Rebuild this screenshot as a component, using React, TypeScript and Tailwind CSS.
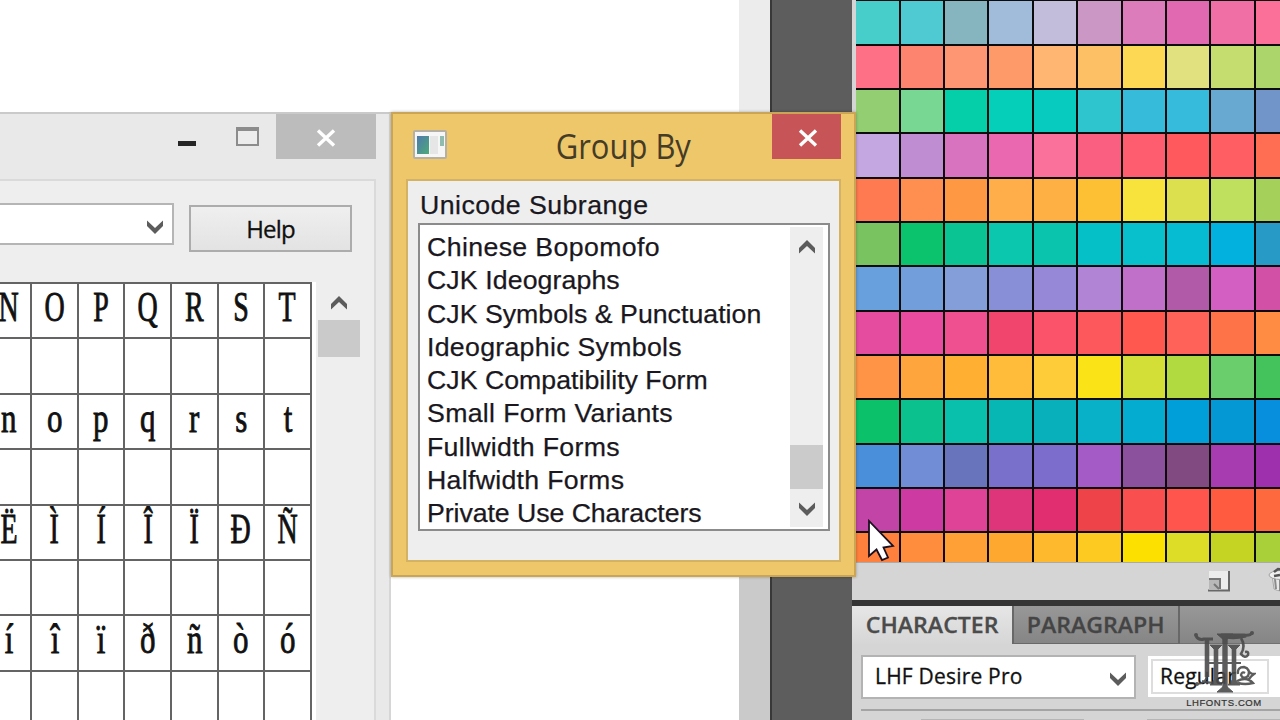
import React from "react";

const swatches: string[][] = [
  ["#47cdca", "#4fcad3", "#86b5c0", "#a1bbdb", "#c2bddb", "#cb97c5", "#dd7cba", "#e169b1", "#f06fa5", "#fb7098"],
  ["#fd7085", "#fd846f", "#fe9673", "#fe9a6a", "#feb672", "#fec065", "#fcd854", "#e1e27f", "#c5dc6e", "#acd56b"],
  ["#93ce72", "#77d793", "#05cfa9", "#06cfb9", "#06cbbe", "#2fc5cf", "#37bbda", "#37bbdc", "#68a9d2", "#7295c9"],
  ["#c4a7e0", "#bf8dd2", "#d873bf", "#ea68b0", "#fa729c", "#fa5e80", "#fe5d70", "#ff595e", "#ff5e62", "#ff6d52"],
  ["#ff7a50", "#ff8f50", "#ff9842", "#ffae4a", "#ffb045", "#fdc035", "#f8e33d", "#dcdf4e", "#bfe05f", "#a5d05a"],
  ["#7ac361", "#0ac36c", "#0bc494", "#0bc7ae", "#0ac4ae", "#06c0c8", "#07c0cb", "#06bcd2", "#02b1de", "#279ac5"],
  ["#67a0dc", "#729fdb", "#849eda", "#888fd6", "#9688d6", "#b184d5", "#c070c8", "#b15aa8", "#d35fc3", "#d250a5"],
  ["#e54c9f", "#e94b9e", "#ef508f", "#f2456d", "#fb5369", "#fd595c", "#ff584f", "#ff6258", "#ff7348", "#ff8c42"],
  ["#ff9446", "#ffa53d", "#ffb033", "#ffbc3b", "#fdcc38", "#fae316", "#d3df37", "#b0da40", "#6bce6d", "#44c35c"],
  ["#0bc169", "#0bc18d", "#09c0ad", "#07b7b4", "#08b0bc", "#08b1c7", "#04acd0", "#019fd9", "#0499d4", "#078edc"],
  ["#4a8fd9", "#718dd6", "#6874bc", "#7970cc", "#7c6dcd", "#a55bc5", "#8c519c", "#814b82", "#a63cb0", "#9e30ad"],
  ["#c344a7", "#cd3ba2", "#df4398", "#de347a", "#e12e70", "#ef434a", "#f9504f", "#ff554d", "#ff5b40", "#ff693e"],
  ["#ff803c", "#ff8d3d", "#ffa036", "#ffa82f", "#ffb92d", "#fdca22", "#fbe000", "#dddc26", "#c5d322", "#a9d039"],
];

const blankRow = ["", "", "", "", "", "", ""];
const charRows: string[][] = [
  ["N", "O", "P", "Q", "R", "S", "T"],
  blankRow,
  ["n", "o", "p", "q", "r", "s", "t"],
  blankRow,
  ["Ë", "Ì", "Í", "Î", "Ï", "Đ", "Ñ"],
  blankRow,
  ["í", "î", "ï", "ð", "ñ", "ò", "ó"],
  blankRow,
];

const subranges = [
  { name: "Chinese Bopomofo", spacing: "tracking-[0.38px]" },
  { name: "CJK Ideographs", spacing: "tracking-[0.1px]" },
  { name: "CJK Symbols & Punctuation", spacing: "tracking-[0.02px]" },
  { name: "Ideographic Symbols", spacing: "tracking-[0.3px]" },
  { name: "CJK Compatibility Form", spacing: "tracking-[0.02px]" },
  { name: "Small Form Variants", spacing: "tracking-[0.33px]" },
  { name: "Fullwidth Forms", spacing: "tracking-[0.3px]" },
  { name: "Halfwidth Forms", spacing: "tracking-[0.3px]" },
  { name: "Private Use Characters", spacing: "tracking-[-0.06px]" },
];

function Chevron({ up = false }: { up?: boolean }) {
  return (
    <svg width="18" height="16" viewBox="0 0 18 16" className={up ? "rotate-180" : ""}>
      <path d="M1 1.5 L9 9 L17 1.5 V7 L9 15 L1 7 Z" fill="#5c5c5c" />
    </svg>
  );
}

function Cross() {
  return (
    <svg width="20" height="18" viewBox="0 0 20 18">
      <path d="M2 1.5 L18 16.5 M18 1.5 L2 16.5" stroke="#fff" strokeWidth="3.4" />
    </svg>
  );
}

function CharacterMap() {
  return (
    <div className="absolute left-0 top-[112px] flex h-[608px] w-[391px] flex-col border-r-2 border-t-2 border-r-[#d6d6d6] border-t-[#cacaca] bg-[#e9e9e9]">
      <div className="flex h-[65px] shrink-0 items-start justify-end pr-[13px]">
        <div className="mr-[40px] mt-[27px] h-[5px] w-[18px] bg-[#262626]" />
        <div className="mr-[17px] mt-[13px] h-[19px] w-[23px] border-2 border-t-[4px] border-[#8c8c8c] bg-[#ececec]" />
        <div className="flex h-[45px] w-[100px] items-center justify-center bg-[#bcbcbc] pt-[2px]">
          <Cross />
        </div>
      </div>
      <div className="mr-[13px] flex min-h-0 flex-1 flex-col border-r-2 border-t-2 border-[#dadada] bg-[#eeeeee]">
        <div className="flex shrink-0 items-start pt-[22px]">
          <div className="flex h-[42px] w-[174px] items-center justify-end border-2 border-l-0 border-[#b5b5b5] bg-white pr-[8px] pt-[5px]">
            <Chevron />
          </div>
          <button className="ml-[15px] mt-[2px] flex h-[47px] w-[163px] items-center justify-center border-2 border-[#acacac] bg-linear-to-b from-[#efefef] to-[#e3e3e3] pt-[1px] font-['Open_Sans',sans-serif] text-[24px] tracking-[-0.8px] text-[#101010] [-webkit-text-stroke:0.3px_#101010]">
            <span>Help</span>
          </button>
        </div>
        <div className="mt-[30px] flex min-h-0 flex-1 overflow-hidden">
          <div className="w-[316px] shrink-0 bg-white">
            <div className="grid w-[312px] grid-cols-[30.3px_repeat(6,44.6px)] gap-[2px] bg-[#646464] py-[2px] pr-[2px]">
              {charRows.flatMap((row, r) =>
                row.map((g, c) => (
                  <div key={`${r}-${c}`} className="flex h-[53.4px] justify-center bg-white">
                    {g && (
                      <span
                        className={
                          (r === 2 || r === 6 ? "scale-x-[0.72] " : "scale-x-[0.65] ") +
                          (c === 0 ? "ml-[-13px] " : "") +
                          "font-['Liberation_Serif',serif] text-[43px] leading-[46px] text-[#111] [-webkit-text-stroke:0.9px_#111]"
                        }
                      >
                        {g}
                      </span>
                    )}
                  </div>
                )),
              )}
            </div>
          </div>
          <div className="ml-[2px] flex w-[42px] flex-col items-center">
            <div className="flex h-[38px] items-center justify-center pt-[3px]">
              <Chevron up />
            </div>
            <div className="h-[37px] w-full bg-[#cacaca]" />
          </div>
        </div>
      </div>
    </div>
  );
}

function AppIcon() {
  return (
    <svg width="34" height="29" viewBox="0 0 34 29">
      <defs>
        <linearGradient id="thumb" x1="0" y1="0" x2="1" y2="1">
          <stop offset="0" stopColor="#4f78ae" />
          <stop offset="1" stopColor="#4bab78" />
        </linearGradient>
      </defs>
      <rect x="1" y="1" width="32" height="27" rx="1" fill="#f6f6f6" stroke="#b4b0a6" strokeWidth="2" />
      <rect x="4" y="6" width="12" height="18" fill="url(#thumb)" />
      <rect x="17" y="6" width="8" height="18" fill="#e6e6e6" />
      <rect x="27" y="6" width="4" height="10" fill="#8fbcae" />
    </svg>
  );
}

function GroupByDialog() {
  return (
    <div className="absolute left-[391px] top-[112px] flex h-[465px] w-[465px] flex-col border-2 border-[#c9a555] bg-[#eec76b] shadow-[0_0_3px_rgba(0,0,0,0.3)]">
      <div className="flex h-[65px] shrink-0 items-start">
        <div className="ml-[20px] mt-[16px] shrink-0">
          <AppIcon />
        </div>
        <div className="flex flex-1 justify-center pl-[27px] pt-[8px] font-['Open_Sans',sans-serif] text-[34px] leading-[48px] text-[#453c26]">
          <span className="scale-x-[0.91] whitespace-nowrap">Group By</span>
        </div>
        <div className="mr-[13px] flex h-[45px] w-[69px] items-center justify-center bg-[#c75456] pl-[2px] pt-[2px]">
          <Cross />
        </div>
      </div>
      <div className="mx-[13px] mb-[13px] flex flex-1 flex-col border-2 border-[#d3b264] bg-[#eeeeee] px-[10px]">
        <div className="h-[42px] pl-[2px] pt-[7px] font-['Liberation_Sans',sans-serif] text-[26.7px] leading-[34px] tracking-[0.46px] text-[#1a1720] [-webkit-text-stroke:0.25px_#1a1720]">
          Unicode Subrange
        </div>
        <div className="flex h-[308px] w-[412px] justify-between border-2 border-[#8b8b8b] bg-white">
          <ul className="pl-[7px] pt-[6px] font-['Liberation_Sans',sans-serif] text-[26.7px] leading-[33.3px] text-[#1a1720] [-webkit-text-stroke:0.25px_#1a1720]">
            {subranges.map((s) => (
              <li key={s.name} className={"whitespace-nowrap " + s.spacing}>
                {s.name}
              </li>
            ))}
          </ul>
          <div className="mr-[5px] mt-[2px] flex h-[300px] w-[33px] flex-col items-center bg-[#eeeeee] pb-[9px] pt-[12px]">
            <Chevron up />
            <div className="mt-[190px] h-[44px] w-full bg-[#cbcbcb]" />
            <div className="mt-[12px]">
              <Chevron />
            </div>
          </div>
        </div>
      </div>
    </div>
  );
}

function NewSwatchIcon() {
  return (
    <svg width="22" height="22" viewBox="0 0 22 22" className="shrink-0">
      <rect x="1" y="1" width="19" height="19" fill="#ededed" />
      <path d="M0 20.5 H21 V1" fill="none" stroke="#686868" strokeWidth="2" />
      <path d="M1 9 H12 V20 H1 Z" fill="#b8b8b8" />
      <path d="M1 9 H12 V19 M6 14 L11 19" fill="none" stroke="#777" strokeWidth="2" />
    </svg>
  );
}

function TrashIcon() {
  return (
    <svg width="26" height="26" viewBox="0 0 26 26">
      <path d="M4 8 L6 22 Q13 26 20 22 L22 8 Z" fill="#e8e8e8" stroke="#a8a8a8" strokeWidth="1" />
      <path d="M7 12 L8 22 M12 12 V24" stroke="#8a8a8a" strokeWidth="2" />
      <ellipse cx="13" cy="8" rx="12" ry="4.5" fill="#f0f0f0" stroke="#a0a0a0" strokeWidth="1" />
      <path d="M6 9 L12 8 M6 5 L10 2 L16 3" fill="none" stroke="#555" strokeWidth="2.5" />
    </svg>
  );
}

function StudioPanel() {
  return (
    <div className="flex w-[428px] shrink-0 flex-col overflow-hidden bg-[#d5d5d5]">
      <div className="h-[562px] shrink-0 overflow-hidden pl-[4.4px]">
        <div className="grid w-[446px] grid-cols-[repeat(10,42.37px)] gap-[2px] bg-[#0c0c0c] pt-[1.3px]">
          {swatches.flatMap((row, r) =>
            row.map((color, c) => <div key={`${r}-${c}`} className="h-[42.34px]" style={{ backgroundColor: color }} />),
          )}
        </div>
      </div>
      <div className="flex h-[38px] shrink-0 items-start border-t border-[#aaaaaa] pl-[356px] pt-[7px]">
        <NewSwatchIcon />
        <div className="ml-[38px] mt-[-3px] w-[12px] shrink-0 overflow-hidden">
          <div className="w-[26px]">
            <TrashIcon />
          </div>
        </div>
      </div>
      <div className="h-[6px] shrink-0 bg-[#353535]" />
      <div className="flex h-[38px] shrink-0 bg-linear-to-b from-[#989898] to-[#858585] font-['Open_Sans',sans-serif] text-[22px] font-semibold leading-[37px] text-[#4b4b4b] [-webkit-text-stroke:0.3px_#4b4b4b]">
        <div className="flex w-[160px] shrink-0 justify-center bg-linear-to-b from-[#e6e6e6] to-[#d6d6d6]">
          <span className="scale-x-[1.05]">CHARACTER</span>
        </div>
        <div className="flex w-[168px] shrink-0 justify-center border-x-2 border-b border-[#686868] text-[#444]">
          <span className="scale-x-[1.05]">PARAGRAPH</span>
        </div>
        <div className="flex-1 border-b border-[#707070]" />
      </div>
      <div className="flex shrink-0 items-start pl-[9px] pt-[11px] font-['Open_Sans',sans-serif] text-[21px] tracking-[0.2px] text-[#111] [-webkit-text-stroke:0.3px_#111]">
        <div className="flex h-[44px] w-[275px] shrink-0 items-center justify-between border-2 border-[#b3b3b3] bg-white pl-[12px] pr-[7px]">
          <span>LHF Desire Pro</span>
          <div className="pt-[3px]">
            <Chevron />
          </div>
        </div>
        <div className="ml-[12px] mt-[1px] flex h-[41px] w-[140px] shrink-0 items-center bg-white pl-[3px]">
          <div className="flex h-[35px] w-[118px] items-center border-2 border-[#dddddd] pl-[7px]">Regular</div>
        </div>
      </div>
      <div className="ml-[9px] mt-[10px] h-[2px] shrink-0 bg-[#a4a4a4]" />
      <div className="flex pl-[69px] pt-[8px]">
        <div className="h-[4px] w-[163px] shrink-0 border-t border-[#b5b5b5]" />
        <div className="ml-[63px] h-[4px] w-[140px] border-t border-[#b5b5b5]" />
      </div>
    </div>
  );
}

function Watermark() {
  return (
    <div className="absolute left-[1184px] top-[630px] flex w-[80px] flex-col items-center opacity-90">
      <svg width="64" height="66" viewBox="0 0 64 66" fill="none" stroke="#4b4b4b">
        <path d="M4 6 Q7 11 12 9 H21 M29 5 H52 Q58 6 60 3 M29 5 Q38 10 54 6" strokeWidth="3" />
        <path d="M15 8 V47" strokeWidth="4.600" />
        <path d="M5 54 Q14 54 15 45 M10 51 Q20 54 26 52" strokeWidth="2.200" />
        <path d="M24 18 V53 M42 18 V53" strokeWidth="4.600" />
        <path d="M18 15 H30 L24 21 Z M36 15 H48 L42 21 Z M18 55 H30 L24 48 Z M36 55 H48 L42 48 Z" fill="#4b4b4b" strokeWidth="1" />
        <path d="M33 4 V60" strokeWidth="5.400" />
        <path d="M25 62 H41 L33 55 Z M25 4 H41 L33 11 Z" fill="#4b4b4b" strokeWidth="1" />
        <path d="M16 33 H49" strokeWidth="2" />
        <path d="M49 8 Q54 16 49 24 Q53 29 56 25 Q57 21 53 22" strokeWidth="2.600" />
        <path d="M46 44 Q45 37 52 37 Q59 39 56 46 Q51 50 49 45 Q50 41 53 43 M56 40 Q58 44 62 44 Q59 46 57 49 M45 51 Q55 46 61 53 Q53 55 46 53" strokeWidth="2.400" />
        <circle cx="4" cy="5" r="2" fill="#4b4b4b" stroke="none" />
        <circle cx="60" cy="3" r="2" fill="#4b4b4b" stroke="none" />
        <circle cx="5" cy="54" r="2" fill="#4b4b4b" stroke="none" />
      </svg>
      <div className="mt-[1px] whitespace-nowrap font-['Liberation_Sans',sans-serif] text-[9.5px] leading-[12px] tracking-[0.6px] text-[#222] [-webkit-text-stroke:0.2px_#222]">
        LHFONTS.COM
      </div>
    </div>
  );
}

export default function App() {
  return (
    <div className="relative flex h-[720px] w-[1280px] overflow-hidden bg-white">
      <div className="flex-1 bg-white" />
      <div className="flex w-[31px] flex-col bg-[#ececec]">
        <div className="h-[400px]" />
        <div className="flex-1 bg-[#cacaca]" />
      </div>
      <div className="w-[82px] border-l-2 border-[#383838] bg-[#5d5d5d]" />
      <StudioPanel />
      <CharacterMap />
      <GroupByDialog />
      <Watermark />
      <svg className="absolute left-[866px] top-[518px]" width="30" height="46" viewBox="0 0 30 46">
        <path
          d="M3 3 V38 L10.500 31.500 L16 42 L22 39.500 L17.500 29.500 L27 28 Z"
          fill="#fff"
          stroke="#1b1020"
          strokeWidth="1.8"
        />
      </svg>
    </div>
  );
}
